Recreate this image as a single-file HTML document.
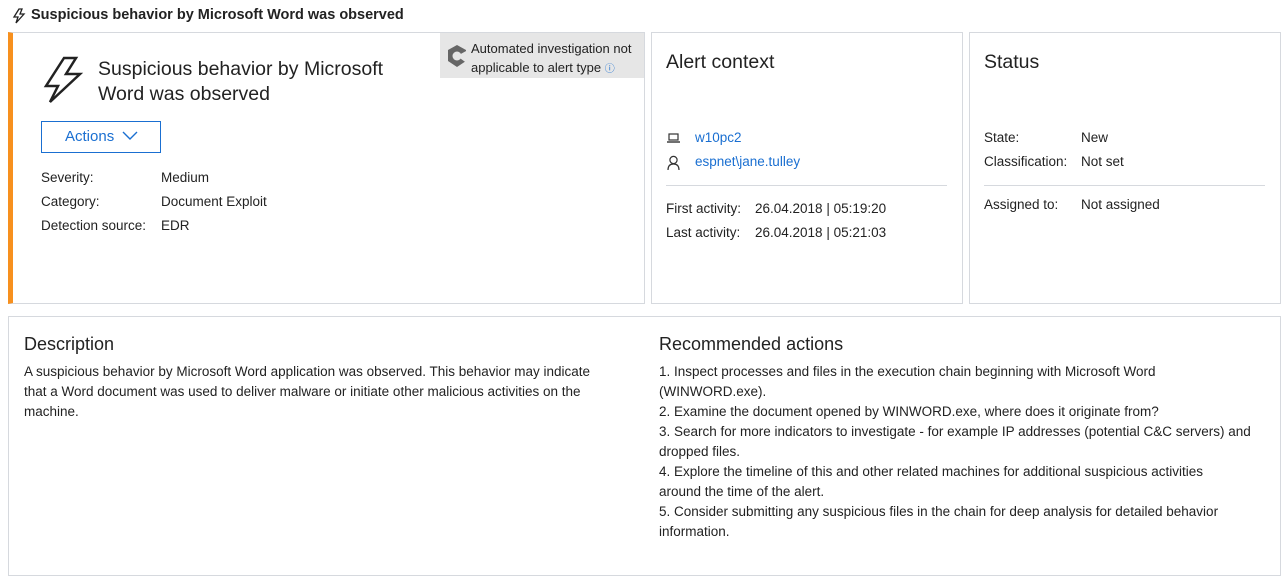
<!DOCTYPE html>
<html><head><style>
*{margin:0;padding:0;box-sizing:border-box}
body{width:1282px;height:567px;background:#fff;font-family:"Liberation Sans",sans-serif;color:#222;position:relative;overflow:hidden;font-size:13.5px}
.a{position:absolute;white-space:nowrap}
.box{position:absolute;border:1px solid #d6d9de;background:#fff}
.blue{color:#1a6fd1}
</style></head><body>
<svg class="a" style="left:12px;top:8px" width="14" height="16" viewBox="0 0 14 16"><path d="M7 1 L2 9 H6 L4 15 L12 6 H8 L10 1 Z" fill="none" stroke="#222" stroke-width="1.3"/></svg>
<div class="a" style="left:31px;top:7px;font-size:14.5px;font-weight:bold;color:#222">Suspicious behavior by Microsoft Word was observed</div>

<div class="box" style="left:8px;top:32px;width:637px;height:272px;border-left:5px solid #f7901e"></div>
<svg class="a" style="left:42px;top:56px" width="42" height="48" viewBox="0 0 42 48"><path d="M22 2 L4 30 H16 L8 46 L38 18 H24 L34 2 Z" fill="none" stroke="#222" stroke-width="2.5" stroke-linejoin="miter"/></svg>
<div class="a" style="left:98px;top:57px;font-size:19.5px;line-height:25px;color:#222">Suspicious behavior by Microsoft<br>Word was observed</div>
<div class="a" style="left:41px;top:121px;width:120px;height:32px;border:1px solid #1a6fd1;font-size:15px;color:#1a6fd1;padding:6px 0 0 23px">Actions <svg width="16" height="10" viewBox="0 0 16 10" style="margin-left:4px"><path d="M1 1 L8 8 L15 1" fill="none" stroke="#1a6fd1" stroke-width="1.4"/></svg></div>
<div class="a" style="left:41px;top:166px;line-height:24px">Severity:<br>Category:<br>Detection source:</div>
<div class="a" style="left:161px;top:166px;line-height:24px">Medium<br>Document Exploit<br>EDR</div>
<div class="a" style="left:440px;top:33px;width:204px;height:45px;background:#e6e6e6"></div>
<svg class="a" style="left:446px;top:44px" width="22" height="24" viewBox="0 0 22 24"><path d="M11 1 L20 6 V17 L11 23 L2 17 V6 Z" fill="#666"/><circle cx="11" cy="12" r="4.5" fill="#e6e6e6"/><path d="M11 12 L22 6 V20 Z" fill="#e6e6e6"/></svg>
<div class="a" style="left:471px;top:39px;font-size:13px;line-height:19px">Automated investigation not<br>applicable to alert type <span class="blue" style="font-size:10px">ⓘ</span></div>

<div class="box" style="left:651px;top:32px;width:312px;height:272px"></div>
<div class="a" style="left:666px;top:51px;font-size:19.5px">Alert context</div>
<svg class="a" style="left:667px;top:133px" width="13" height="10" viewBox="0 0 13 10"><rect x="2" y="1" width="9" height="6" fill="none" stroke="#333" stroke-width="1.2"/><path d="M0 9 H13" stroke="#333" stroke-width="1.4"/></svg>
<svg class="a" style="left:667px;top:155px" width="13" height="15" viewBox="0 0 13 15"><circle cx="6.5" cy="5" r="3.6" fill="none" stroke="#333" stroke-width="1.2"/><path d="M1 15 Q1 9 6.5 9 Q12 9 12 15" fill="none" stroke="#333" stroke-width="1.2"/></svg>
<div class="a blue" style="left:695px;top:126px;line-height:24px">w10pc2<br>espnet\jane.tulley</div>
<div class="a" style="left:666px;top:185px;width:281px;border-top:1px solid #d6d9de"></div>
<div class="a" style="left:666px;top:197px;line-height:24px">First activity:<br>Last activity:</div>
<div class="a" style="left:755px;top:197px;line-height:24px">26.04.2018 | 05:19:20<br>26.04.2018 | 05:21:03</div>

<div class="box" style="left:969px;top:32px;width:312px;height:272px"></div>
<div class="a" style="left:984px;top:51px;font-size:19.5px">Status</div>
<div class="a" style="left:984px;top:126px;line-height:24px">State:<br>Classification:</div>
<div class="a" style="left:1081px;top:126px;line-height:24px">New<br>Not set</div>
<div class="a" style="left:984px;top:185px;width:281px;border-top:1px solid #d6d9de"></div>
<div class="a" style="left:984px;top:197px">Assigned to:</div>
<div class="a" style="left:1081px;top:197px">Not assigned</div>

<div class="box" style="left:8px;top:316px;width:1273px;height:260px"></div>
<div class="a" style="left:24px;top:334px;font-size:18px">Description</div>
<div class="a" style="left:24px;top:362px;line-height:20px">A suspicious behavior by Microsoft Word application was observed. This behavior may indicate<br>that a Word document was used to deliver malware or initiate other malicious activities on the<br>machine.</div>
<div class="a" style="left:659px;top:334px;font-size:18px">Recommended actions</div>
<div class="a" style="left:659px;top:362px;line-height:20px">1. Inspect processes and files in the execution chain beginning with Microsoft Word<br>(WINWORD.exe).<br>2. Examine the document opened by WINWORD.exe, where does it originate from?<br>3. Search for more indicators to investigate - for example IP addresses (potential C&amp;C servers) and<br>dropped files.<br>4. Explore the timeline of this and other related machines for additional suspicious activities<br>around the time of the alert.<br>5. Consider submitting any suspicious files in the chain for deep analysis for detailed behavior<br>information.</div>
</body></html>
